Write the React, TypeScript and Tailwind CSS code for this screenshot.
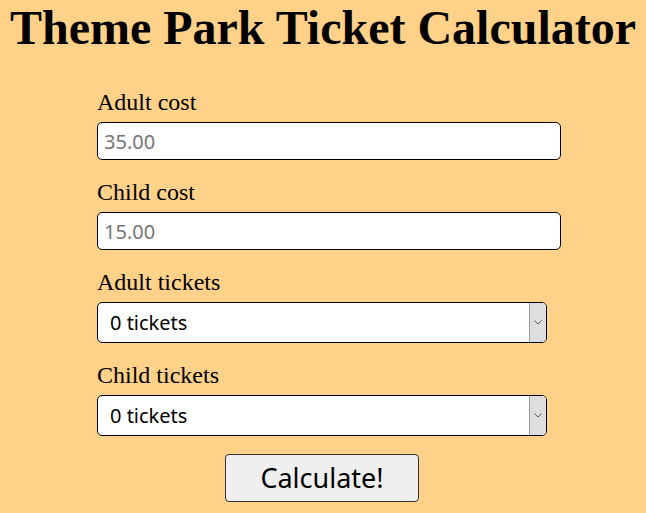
import { useState } from 'react'

const sans = "font-['Noto_Sans','DejaVu_Sans',sans-serif]"

function Label({ htmlFor, children }: { htmlFor: string; children: string }) {
  return (
    <label htmlFor={htmlFor} className="block text-[24px] leading-[28px] text-black">
      {children}
    </label>
  )
}

function TicketSelect({ id, value, onChange }: { id: string; value: number; onChange: (n: number) => void }) {
  return (
    <div className="relative mt-[6px] h-[41px] w-[450px]">
      <select
        id={id}
        value={value}
        onChange={e => onChange(Number(e.target.value))}
        className={`h-full w-full appearance-none rounded-[5px] border border-black bg-white pl-[12px] text-[20px] text-black outline-none ${sans}`}
      >
        {Array.from({ length: 11 }, (_, i) => (
          <option key={i} value={i}>{i} tickets</option>
        ))}
      </select>
      <div className="pointer-events-none absolute top-px right-px bottom-px flex w-[17px] items-center justify-center rounded-r-[4px] border-l border-[#9a9a9a] bg-[#dedede]">
        <svg width="8" height="5" viewBox="0 0 8 5" fill="none">
          <path d="M0.5 0.5 L4 4 L7.5 0.5" stroke="#555" strokeWidth="1" />
        </svg>
      </div>
    </div>
  )
}

export default function App() {
  const [adult, setAdult] = useState(0)
  const [child, setChild] = useState(0)
  const [adultCost, setAdultCost] = useState('')
  const [childCost, setChildCost] = useState('')

  return (
    <div className="min-h-screen bg-[#ffd189] font-['Liberation_Serif','Times_New_Roman',serif] text-black">
      <h1 className="text-center text-[48px] font-bold leading-[55px]">Theme Park Ticket Calculator</h1>

      <form className="mt-[33px] ml-[97px] w-[464px]" onSubmit={e => e.preventDefault()}>
        <Label htmlFor="adultCost">Adult cost</Label>
        <input
          id="adultCost"
          value={adultCost}
          onChange={e => setAdultCost(e.target.value)}
          placeholder="35.00"
          className={`mt-[6px] block h-[38px] w-[464px] rounded-[5px] border border-black bg-white px-[6px] text-[20px] text-black outline-none placeholder:text-[#757575] ${sans}`}
        />

        <div className="mt-[18px]">
          <Label htmlFor="childCost">Child cost</Label>
          <input
            id="childCost"
            value={childCost}
            onChange={e => setChildCost(e.target.value)}
            placeholder="15.00"
            className={`mt-[6px] block h-[38px] w-[464px] rounded-[5px] border border-black bg-white px-[6px] text-[20px] text-black outline-none placeholder:text-[#757575] ${sans}`}
          />
        </div>

        <div className="mt-[18px]">
          <Label htmlFor="adultTickets">Adult tickets</Label>
          <TicketSelect id="adultTickets" value={adult} onChange={setAdult} />
        </div>

        <div className="mt-[18px]">
          <Label htmlFor="childTickets">Child tickets</Label>
          <TicketSelect id="childTickets" value={child} onChange={setChild} />
        </div>

        <div className="mt-[18px] ml-[128px]">
          <button
            type="submit"
            className={`h-[48px] w-[194px] rounded-[4px] border border-[#333] bg-[#efefef] text-[27px] text-black ${sans}`}
          >
            Calculate!
          </button>
        </div>
      </form>
    </div>
  )
}
